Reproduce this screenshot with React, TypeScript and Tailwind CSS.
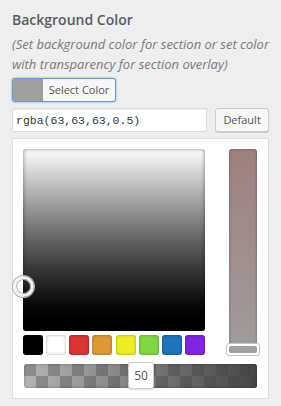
import React from "react";

const swatches = ["#000000", "#ffffff", "#dd3333", "#dd9933", "#eeee22", "#81d742", "#1e73be", "#8224e3"];

const App = () => {
  return (
    <div className="min-h-[406px] w-full bg-[#eeeeee] pt-[10px] font-['Open_Sans',sans-serif]">
      <div className="px-[12px]">
        <h3 className="text-[14px] leading-[20px] font-semibold text-[#555d66]">Background Color</h3>
        <p className="mt-[4px] text-[13px] leading-[20px] italic text-[#7a7a7a]">
          (Set background color for section or set color with transparency for section overlay)
        </p>

        <button
          type="button"
          className="mt-[4px] flex h-[24px] w-[104px] items-stretch overflow-hidden rounded-[3px] border border-[#5b9dd9] bg-[#f7f7f7] shadow-[0_0_2px_rgba(30,140,190,0.8)]"
        >
          <span className="w-[30px] bg-[#9f9f9f]" />
          <span className="flex flex-1 items-center justify-center text-[11px] text-[#555555]">Select Color</span>
        </button>

        <div className="mt-[6px] flex items-center">
          <input
            type="text"
            readOnly
            value="rgba(63,63,63,0.5)"
            className="h-[24px] w-[196px] border border-[#dddddd] bg-white px-[3px] font-['Liberation_Mono',monospace] text-[11.5px] text-[#32373c] shadow-[inset_0_1px_2px_rgba(0,0,0,0.07)] outline-none"
          />
          <button
            type="button"
            className="ml-[8px] h-[24px] w-[54px] rounded-[3px] border border-[#cccccc] bg-[#f7f7f7] text-[11px] text-[#555555] shadow-[0_1px_0_#cccccc]"
          >
            Default
          </button>
        </div>
      </div>

      <div className="relative ml-[12px] mt-[6px] h-[261px] w-[257px] border border-[#dddddd] bg-white px-[10px] pt-[10px]">
        <div className="flex">
          <div className="w-[182px]">
            <div className="relative h-[182px] w-[182px] rounded-[3px] bg-linear-to-b from-[#ffffff] to-[#000000] shadow-[inset_0_0_4px_rgba(0,0,0,0.45)]">
              <div className="absolute left-[-10px] top-[127px] h-[21px] w-[21px] rounded-full border-[3px] border-[#f2f2f2] shadow-[0_0_0_1px_#b0b0b0,inset_0_0_0_1px_#b0b0b0]" />
            </div>
            <div className="mt-[4px] flex justify-between">
              {swatches.map((c) => (
                <div
                  key={c}
                  className="h-[20px] w-[20px] rounded-[3px] shadow-[inset_0_0_3px_rgba(0,0,0,0.35)]"
                  style={{ backgroundColor: c }}
                />
              ))}
            </div>
          </div>
          <div className="relative ml-[24px] h-[206px] w-[28px] rounded-[3px] bg-linear-to-b from-[#9e7f7f] to-[#a19d9d] shadow-[inset_0_0_3px_rgba(0,0,0,0.35)]">
            <div className="absolute left-[-3px] top-[194px] h-[13px] w-[34px] rounded-[3px] border border-[#c4c4c4] bg-white p-[2px]">
              <div className="h-full w-full rounded-[2px] bg-[#a2a0a0]" />
            </div>
          </div>
        </div>

        <div className="relative ml-[1px] mt-[9px] h-[24px] w-[233px] rounded-[3px] bg-[repeating-conic-gradient(#b4b4b4_0%_25%,#8e8e8e_0%_50%)] bg-[length:24px_24px]">
          <div className="h-full w-full rounded-[3px] bg-linear-to-r from-transparent to-[rgba(63,63,63,0.95)] shadow-[inset_0_0_3px_rgba(0,0,0,0.3)]" />
          <div className="absolute left-[104px] top-[-2px] flex h-[27px] w-[26px] items-center justify-center rounded-[3px] border border-[#cccccc] bg-white text-[12px] text-[#555555] shadow-[0_1px_2px_rgba(0,0,0,0.15)]">
            50
          </div>
        </div>
      </div>
    </div>
  );
};

export default App;
